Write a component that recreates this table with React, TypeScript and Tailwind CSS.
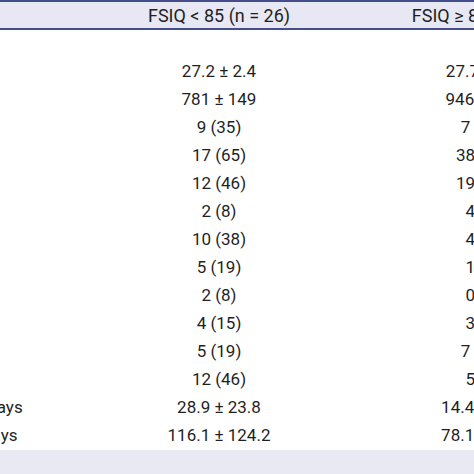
import React from "react";

const rows: [string, string, string][] = [
  ["Gestational age, weeks", "27.2 ± 2.4", "27.7 ± 2.1"],
  ["Birth weight, g", "781 ± 149", "946 ± 212"],
  ["Male sex", "9 (35)", "7 (13)"],
  ["Cesarean section", "17 (65)", "38 (72)"],
  ["Antenatal steroid", "12 (46)", "19 (36)"],
  ["Chorioamnionitis", "2 (8)", "4 (8)"],
  ["Preeclampsia", "10 (38)", "4 (8)"],
  ["Sepsis", "5 (19)", "1 (2)"],
  ["NEC", "2 (8)", "0 (0)"],
  ["IVH grade ≥ 3", "4 (15)", "3 (6)"],
  ["PVL", "5 (19)", "7 (13)"],
  ["BPD", "12 (46)", "5 (9)"],
  ["Duration of MV support, days", "28.9 ± 23.8", "14.4 ± 18.0"],
  ["Length of hospital stay, days", "116.1 ± 124.2", "78.1 ± 31.4"],
];

export default function App() {
  return (
    <div
      className="w-[474px] h-[474px] overflow-hidden bg-white text-[#1f1f1f]"
      style={{ fontFamily: "Roboto, 'Noto Sans', sans-serif" }}
    >
      <div className="ml-[-282px] w-[892px]">
        <div className="grid grid-cols-[364px_274px_254px] h-[30px] items-center border-t-2 border-b-2 border-[#434e8a] bg-[#e7e8f4] text-[18px]">
          <div className="pl-[85px]">Characteristics</div>
          <div className="text-center">FSIQ &lt; 85 (n = 26)</div>
          <div className="text-center">FSIQ ≥ 85 (n = 53)</div>
        </div>
        <div className="h-[28px]" />
        {rows.map(([label, a, b], i) => (
          <div
            key={i}
            className="grid grid-cols-[364px_274px_254px] h-[28px] items-center text-[17px]"
          >
            <div className="pl-[85px] whitespace-nowrap">{label}</div>
            <div className="text-center whitespace-nowrap">{a}</div>
            <div className="text-center whitespace-nowrap">{b}</div>
          </div>
        ))}
        <div className="h-[24px] bg-[#e9e9f4]" />
      </div>
    </div>
  );
}
